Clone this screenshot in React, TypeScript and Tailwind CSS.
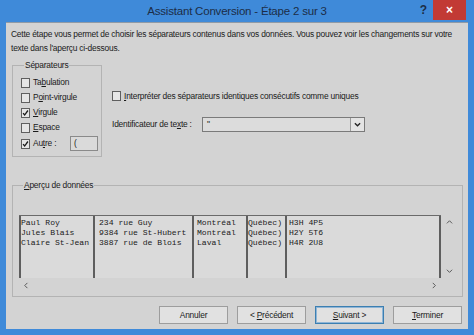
import React from 'react'

const sans = "font-['Liberation_Sans',Arial,sans-serif]"
const mono = "font-['Liberation_Mono','Courier_New',monospace]"

function Box({ checked }: { checked?: boolean }) {
  return (
    <span className="flex h-[10px] w-[9px] shrink-0 items-center justify-center border border-[#5f5f5f] bg-[#e6e6e6]">
      {checked && (
        <svg viewBox="0 0 9 10" className="h-[10px] w-[9px]">
          <path d="M1.4 5.2 L3.4 7.6 L7.6 1.8" stroke="#1b1b1b" strokeWidth="1.7" fill="none" />
        </svg>
      )}
    </span>
  )
}

function Chevron({ dir }: { dir: 'up' | 'down' | 'left' | 'right' }) {
  const d = {
    up: 'M1 5 L4 2 L7 5',
    down: 'M1 2 L4 5 L7 2',
    left: 'M5 1 L2 4 L5 7',
    right: 'M2 1 L5 4 L2 7',
  }[dir]
  return (
    <svg viewBox="0 0 8 8" className="h-[7px] w-[7px]">
      <path d={d} stroke="#555" strokeWidth="1.1" fill="none" />
    </svg>
  )
}

function Check({ label, checked }: { label: React.ReactNode; checked?: boolean }) {
  return (
    <div className="flex h-[15px] items-center gap-[3px]">
      <Box checked={checked} />
      <span className="whitespace-nowrap">{label}</span>
    </div>
  )
}

const rows = [
  ['Paul Roy', '234 rue Guy', 'Montréal', 'Québec)', 'H3H 4P5'],
  ['Jules Blais', '9384 rue St-Hubert', 'Montréal', 'Québec)', 'H2Y 5T6'],
  ['Claire St-Jean', '3887 rue de Blois', 'Laval', 'Québec)', 'H4R 2U8'],
]

const cols = [
  { w: 'w-[74px]', pad: 'pl-0' },
  { w: 'w-[99px]', pad: 'pl-[4px]' },
  { w: 'w-[54px]', pad: 'pl-[3px]' },
  { w: 'w-[39px]', pad: 'pl-0' },
  { w: 'flex-1', pad: 'pl-[2px]' },
]

function Button({ children, focused }: { children: React.ReactNode; focused?: boolean }) {
  return (
    <div
      className={`flex h-[18px] w-[69px] items-center justify-center border bg-[#e1e1e1] ${
        focused ? 'border-[#3c7fb1] shadow-[inset_0_0_0_1px_#8fb5d6]' : 'border-[#9d9d9d]'
      }`}
    >
      <span className="whitespace-pre">{children}</span>
    </div>
  )
}

export default function App() {
  return (
    <div className={`flex h-[335px] w-[474px] flex-col bg-[#3f8ad9] text-[#1a1a1a] ${sans}`}>
      {/* title bar */}
      <div className="flex h-[22px] shrink-0 items-start">
        <div className="w-[60px]" />
        <div className="flex-1 whitespace-nowrap pt-[4px] text-center text-[11.5px] leading-[14px] tracking-[-0.2px] text-[#1c2d47]">
          Assistant Conversion - Étape 2 sur 3
        </div>
        <div className="flex w-[60px] items-start pr-[8px]">
          <span className="w-[19px] pt-[3px] text-center text-[12px] font-bold leading-[14px] text-[#1c2d47]">?</span>
          <span className="flex h-[20px] w-[33px] items-center justify-center bg-[#c23a35] text-[12px] font-bold text-white">
            ×
          </span>
        </div>
      </div>

      {/* client area */}
      <div className="mx-[6px] mb-[6px] flex flex-1 flex-col border-t border-[#8f9aa6] bg-[#d3d3d3] text-[8.4px] tracking-[-0.2px]">
        <p className="px-[5px] pt-[5px] leading-[13.5px]">
          Cette étape vous permet de choisir les séparateurs contenus dans vos données. Vous pouvez voir les changements sur votre
          texte dans l'aperçu ci-dessous.
        </p>

        <div className="mt-[4px] flex">
          <fieldset className="ml-[6px] h-[98px] w-[90px] border border-[#b3b3b3] pl-[8px] pt-[4px]">
            <legend className="ml-[3px] px-[1px] leading-[12px]">Séparateurs</legend>
            <Check label={<>Ta<u>b</u>ulation</>} />
            <Check label={<>P<u>o</u>int-virgule</>} />
            <Check label={<><u>V</u>irgule</>} checked />
            <Check label={<><u>E</u>space</>} />
            <div className="flex h-[17px] items-center gap-[3px]">
              <Box checked />
              <span className="w-[34px] whitespace-nowrap">
                Au<u>t</u>re :
              </span>
              <span className="flex h-[15px] w-[28px] items-center border border-[#8a8a8a] bg-[#dadada] pl-[3px]">(</span>
            </div>
          </fieldset>

          <div className="ml-[10px] flex flex-col pt-[31px]">
            <div className="flex h-[12px] items-center gap-[3px]">
              <Box />
              <span className="whitespace-nowrap">
                <u>I</u>nterpréter des séparateurs identiques consécutifs comme uniques
              </span>
            </div>
            <div className="mt-[15px] flex h-[15px] items-center">
              <span className="w-[90px] whitespace-nowrap">
                Identificateur de te<u>x</u>te :
              </span>
              <div className="flex h-[15px] w-[163px] items-center border border-[#7a7a7a] bg-[#dcdcdc]">
                <span className="flex-1 pl-[4px]">"</span>
                <span className="flex h-full w-[14px] items-center justify-center border-l border-[#9a9a9a] bg-[#e4e4e4]">
                  <svg viewBox="0 0 8 8" className="h-[7px] w-[7px]">
                    <path d="M1 2.5 L4 5.5 L7 2.5" stroke="#222" strokeWidth="1.5" fill="none" />
                  </svg>
                </span>
              </div>
            </div>
          </div>
        </div>

        <fieldset className="ml-[6px] mr-[5px] mt-[22px] h-[118px] border border-[#b3b3b3] pl-[6px] pt-[24px]">
          <legend className="ml-[4px] px-[1px] leading-[12px]">
            <u>A</u>perçu de données
          </legend>
          <div className="grid grid-cols-[422px_17px] grid-rows-[63px_14px]">
            <div className={`flex border-t border-[#6a6a6a] bg-[#dadada] text-[8.1px] leading-[10px] tracking-normal ${mono}`}>
              {cols.map((c, i) => (
                <div
                  key={i}
                  className={`${c.w} ${c.pad} border-l-2 border-[#5e5e5e] pt-[2px] ${i === 4 ? 'border-r-2' : ''}`}
                >
                  {rows.map((r, j) => (
                    <div key={j} className="whitespace-pre">
                      {r[i]}
                    </div>
                  ))}
                </div>
              ))}
            </div>
            <div className="flex flex-col items-center justify-between pb-[3px] pt-[4px]">
              <Chevron dir="up" />
              <Chevron dir="down" />
            </div>
            <div className="flex items-center justify-between pl-[4px] pr-[3px]">
              <Chevron dir="left" />
              <Chevron dir="right" />
            </div>
            <div />
          </div>
        </fieldset>

        <div className="mt-[9px] flex justify-end gap-[9px] pr-[6px]">
          <Button>Annuler</Button>
          <Button>
            &lt; <u>P</u>récédent
          </Button>
          <Button focused>
            <u>S</u>uivant &gt;
          </Button>
          <Button>
            <u>T</u>erminer
          </Button>
        </div>
      </div>
    </div>
  )
}
